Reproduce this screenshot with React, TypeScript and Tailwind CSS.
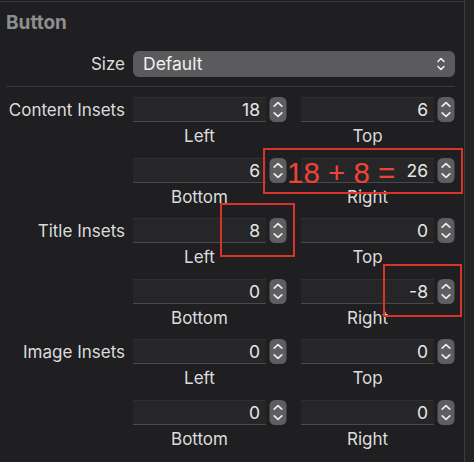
import React from "react";

const font = { fontFamily: "Inter, 'Noto Sans', sans-serif" };

function Stepper() {
  return (
    <svg width="18" height="25" viewBox="0 0 18 25" className="ml-[3px] shrink-0">
      <rect x="0.5" y="0" width="17" height="25" rx="5.5" fill="#5e5e60" />
      <path d="M5.2 9.2 L9 5.6 L12.8 9.2" fill="none" stroke="#ececec" strokeWidth="1.7" strokeLinecap="round" strokeLinejoin="round" />
      <path d="M5.2 15.8 L9 19.4 L12.8 15.8" fill="none" stroke="#ececec" strokeWidth="1.7" strokeLinecap="round" strokeLinejoin="round" />
    </svg>
  );
}

function Field({ value, label }: { value: string; label: string }) {
  return (
    <div className="flex flex-col">
      <div className="flex">
        <div className="w-[133px] h-[25px] bg-[#262628] border-t border-t-[#303032] border-b border-b-[#4a4a4c] flex items-center justify-end pr-[6px] text-[17.5px] text-[#e6e6e6] leading-none">
          {value}
        </div>
        <Stepper />
      </div>
      <div className="w-[133px] h-[24px] pt-[4px] flex items-center justify-center text-[17px] text-[#dcdcdc] leading-none">
        {label}
      </div>
    </div>
  );
}

function Row({ label, a, b, la, lb }: { label?: string; a: string; b: string; la: string; lb: string }) {
  return (
    <div className="flex">
      <div className="w-[125px] h-[25px] pt-[1px] flex items-center justify-end text-[17px] text-[#dcdcdc] leading-none whitespace-nowrap">
        {label}
      </div>
      <div className="ml-[8px] flex gap-[14px]">
        <Field value={a} label={la} />
        <Field value={b} label={lb} />
      </div>
    </div>
  );
}

function Group({ label, v }: { label: string; v: [string, string, string, string] }) {
  return (
    <div className="flex flex-col gap-[12px]">
      <Row label={label} a={v[0]} b={v[1]} la="Left" lb="Top" />
      <Row a={v[2]} b={v[3]} la="Bottom" lb="Right" />
    </div>
  );
}

export default function App() {
  return (
    <div className="relative w-[474px] h-[462px] overflow-hidden bg-[#232325]" style={font}>
      <div className="w-[465px] h-[462px] bg-[#1f1f21] border-r border-r-[#3a3a3c] flex flex-col">
        <div className="mt-[1px] h-[1px] bg-[#353537]" />
        <div className="mt-[10px] pl-[6px] h-[20px] flex items-center text-[19px] font-bold text-[#8e8e90] leading-none">
          Button
        </div>
        <div className="mt-[19px] flex items-center h-[26px]">
          <div className="w-[125px] text-right text-[17px] text-[#dcdcdc] leading-none">Size</div>
          <div className="ml-[8px] w-[322px] h-[26px] rounded-[6px] bg-[#5b5b5d] flex items-center pl-[10px] pr-[9px] text-[17.5px] text-[#f0f0f0] leading-none">
            <span className="flex-1">Default</span>
            <svg width="10" height="16" viewBox="0 0 10 16">
              <path d="M2 5.5 L5 2.5 L8 5.5" fill="none" stroke="#f0f0f0" strokeWidth="1.6" strokeLinecap="round" strokeLinejoin="round" />
              <path d="M2 10.5 L5 13.5 L8 10.5" fill="none" stroke="#f0f0f0" strokeWidth="1.6" strokeLinecap="round" strokeLinejoin="round" />
            </svg>
          </div>
        </div>
        <div className="mt-[9px] ml-[6px] w-[449px] h-px bg-[#3a3a3c]" />
        <div className="mt-[10px] flex flex-col gap-[11px]">
          <Group label="Content Insets" v={["18", "6", "6", "26"]} />
          <Group label="Title Insets" v={["8", "0", "0", "-8"]} />
          <Group label="Image Insets" v={["0", "0", "0", "0"]} />
        </div>
      </div>

      {/* red annotations */}
      <div className="absolute left-[263px] top-[148px] w-[200px] h-[46px] border-2 border-[#d9342a]" />
      <div
        className="absolute left-[287px] top-[158px] text-[29.5px] leading-none text-[#ee4435] whitespace-nowrap"
        style={{ fontFamily: "'Liberation Sans', Arial, sans-serif" }}
      >
        18 + 8 =
      </div>
      <div className="absolute left-[220px] top-[203px] w-[75px] h-[54px] border-2 border-[#d9342a]" />
      <div className="absolute left-[383px] top-[264px] w-[79px] h-[53px] border-2 border-[#d9342a]" />
    </div>
  );
}
